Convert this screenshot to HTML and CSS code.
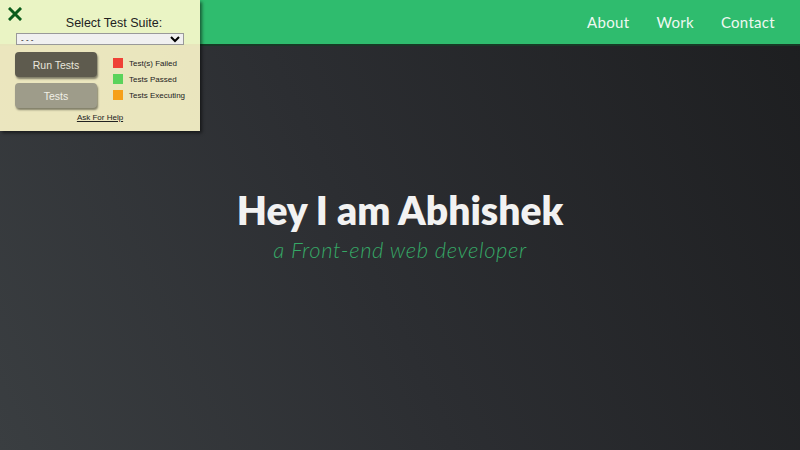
FILE: index.html
```html
<!DOCTYPE html>
<html>
    <head>
        <title>Abhishek</title>
        <link rel="stylesheet" href="styles.css">
    </head>
    <body>
        <header class="topbar">
            <nav class="nav">
                <a href="#">About</a>
                <a href="#">Work</a>
                <a href="#">Contact</a>
            </nav>
        </header>

        <main class="hero">
            <h1>Hey I am Abhishek</h1>
            <p class="tagline">a Front-end web developer</p>
        </main>

        <div class="test-panel">
            <button class="close" aria-label="close">
                <svg width="14" height="14" viewBox="0 0 14 14">
                    <path d="M2 2 L12 12 M12 2 L2 12" stroke="#0b5d1c" stroke-width="3" stroke-linecap="square"/>
                </svg>
            </button>
            <div class="suite-label">Select Test Suite:</div>
            <select class="suite">
                <option>- - -</option>
            </select>
            <div class="panel-body">
                <div class="buttons">
                    <button class="btn run">Run Tests</button>
                    <button class="btn tests">Tests</button>
                </div>
                <ul class="legend">
                    <li><span class="swatch failed"></span>Test(s) Failed</li>
                    <li><span class="swatch passed"></span>Tests Passed</li>
                    <li><span class="swatch running"></span>Tests Executing</li>
                </ul>
            </div>
            <a class="help" href="#">Ask For Help</a>
        </div>
    </body>
</html>
```
FILE: styles.css
```css
html, body {
    height: 100%;
}

body {
    margin: 0;
    font-family: "Open Sans", sans-serif;
    background: linear-gradient(65deg, #3a3e41 0%, #2c2e32 45%, #1d1e20 100%);
    overflow: hidden;
}

.topbar {
    height: 44px;
    background-color: #2fbc6e;
    box-shadow: 0 2px 0 #173a26;
    display: flex;
    justify-content: flex-end;
    align-items: center;
}

.nav {
    display: flex;
    gap: 27px;
    padding-right: 25px;
    padding-bottom: 1px;
}

.nav a {
    color: #eef8f1;
    text-decoration: none;
    font-family: "Lato", sans-serif;
    font-size: 15px;
    letter-spacing: 0.3px;
}

.hero {
    text-align: center;
    padding-top: 143px;
}

.hero h1 {
    margin: 0;
    color: #f2f2f2;
    font-family: "Lato", sans-serif;
    font-weight: 800;
    font-size: 39px;
    line-height: 46px;
}

.tagline {
    margin: 3px 0 0;
    color: #36a866;
    font-family: "Lato", sans-serif;
    font-weight: 300;
    font-style: italic;
    font-size: 22px;
    letter-spacing: 0.6px;
}

.test-panel {
    position: absolute;
    top: 0;
    left: 0;
    width: 200px;
    height: 131px;
    box-sizing: border-box;
    background-color: rgba(255, 250, 205, 0.9);
    box-shadow: 2px 2px 3px rgba(0, 0, 0, 0.5);
    font-family: "Liberation Sans", Arial, sans-serif;
    color: #222;
    padding-top: 16px;
}

.close {
    position: absolute;
    top: 7px;
    left: 8px;
    border: none;
    background: none;
    padding: 0;
    width: 14px;
    height: 14px;
}

.suite-label {
    text-align: center;
    font-size: 12.5px;
    margin-left: 28px;
}

.suite {
    display: block;
    width: 168px;
    height: 12px;
    margin: 3px 0 0 16px;
    font-size: 8px;
    padding: 0;
    border: 1px solid #999;
    background-color: #f0f0f0;
}

.panel-body {
    display: flex;
    padding: 7px 0 0 15px;
}

.buttons {
    display: flex;
    flex-direction: column;
    gap: 6px;
}

.btn {
    width: 82px;
    height: 25px;
    border: none;
    border-radius: 4px;
    font-family: "Liberation Sans", Arial, sans-serif;
    font-size: 10.5px;
    box-shadow: 1px 2px 2px rgba(0, 0, 0, 0.45);
}

.btn.run {
    background-color: #5e5b4e;
    color: #e8e6dc;
}

.btn.tests {
    background-color: #9e9c8a;
    color: #f0efe6;
}

.legend {
    list-style: none;
    margin: 3px 0 0 16px;
    padding: 0;
    font-size: 8px;
}

.legend li {
    display: flex;
    align-items: center;
    height: 16px;
}

.swatch {
    width: 10px;
    height: 10px;
    margin-right: 6px;
}

.swatch.failed {
    background-color: #ef4136;
}

.swatch.passed {
    background-color: #5bd35b;
}

.swatch.running {
    background-color: #f6a01a;
}

.help {
    display: block;
    text-align: center;
    font-size: 8px;
    color: #222;
    margin-top: 5px;
}
```
